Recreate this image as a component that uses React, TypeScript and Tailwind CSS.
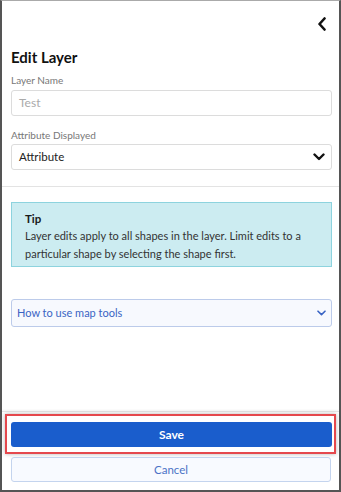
import React from "react";

const FONT = "font-['Lato','Noto_Sans',sans-serif]";

function BackChevron() {
  return (
    <svg width="10" height="14" viewBox="0 0 10 14" aria-hidden>
      <path d="M7.5 1.5 L2.5 7 L7.5 12.5" fill="none" stroke="#111" strokeWidth="2.6" strokeLinecap="round" strokeLinejoin="round" />
    </svg>
  );
}

function SelectChevron() {
  return (
    <svg width="12" height="8" viewBox="0 0 12 8" aria-hidden>
      <path d="M1.5 1.5 L6 6 L10.5 1.5" fill="none" stroke="#111" strokeWidth="2.4" strokeLinecap="round" strokeLinejoin="round" />
    </svg>
  );
}

function SmallChevron() {
  return (
    <svg width="9" height="6" viewBox="0 0 9 6" aria-hidden>
      <path d="M1 1.2 L4.5 4.6 L8 1.2" fill="none" stroke="#3a64c4" strokeWidth="1.6" strokeLinecap="round" strokeLinejoin="round" />
    </svg>
  );
}

export default function App() {
  return (
    <div
      className={`${FONT} flex h-[492px] w-[341px] flex-col border-b-2 border-l-2 border-r-2 border-t border-b-[#555] border-l-[#555] border-r-[#555] border-t-[#aaa] bg-white text-[#222]`}
    >
      <div className="flex h-[46px] shrink-0 items-center justify-end pr-[12px]">
        <BackChevron />
      </div>

      <div className="pl-[9px] pr-[7px]">
        <h1 className="text-[15px] font-bold leading-[20px] text-[#111]">Edit Layer</h1>

        <label className="mt-[6px] block text-[10px] leading-[14px] text-[#777]">Layer Name</label>
        <div className="mt-[3px] flex h-[26px] items-center rounded-[3px] border border-[#dcdcdc] px-[7px] text-[12px] text-[#aaa]">
          Test
        </div>

        <label className="mt-[12px] block text-[10px] leading-[14px] text-[#777]">Attribute Displayed</label>
        <div className="mt-[2px] flex h-[26px] items-center justify-between rounded-[3px] border border-[#dcdcdc] pl-[7px] pr-[6px] text-[11.5px] text-[#222]">
          <span>Attribute</span>
          <SelectChevron />
        </div>
      </div>

      <div className="mt-[16px] border-t border-[#e3e3e3]" />

      <div className="pl-[9px] pr-[7px]">
        <div className="mt-[15px] h-[65px] border border-[#8dd3de] bg-[#ccecf1] pl-[13px] pr-[8px] pt-[8px]">
          <p className="text-[11.5px] font-bold leading-[16px] text-[#1a1a1a]">Tip</p>
          <p className="text-[11px] leading-[18px] text-[#333]">
            Layer edits apply to all shapes in the layer. Limit edits to a particular shape by selecting the shape first.
          </p>
        </div>

        <div className="mt-[32px] flex h-[28px] items-center justify-between rounded-[3px] border border-[#bccbea] bg-[#f7f9fe] pl-[5px] pr-[5px] text-[11px] text-[#3a64c4]">
          <span>How to use map tools</span>
          <SmallChevron />
        </div>
      </div>

      <div className="flex-1" />

      <div className="border-t border-[#e6e6e6] px-[3px] pb-[8px] pt-[2px] shadow-[0_-1px_2px_rgba(0,0,0,0.04)]">
        <div className="h-[40px] border-2 border-[#e5484d] pl-[4px] pr-[2px] pt-[6px] shadow-[0_0_4px_rgba(0,0,0,0.3)]">
          <button className="flex h-[25px] w-full items-center justify-center rounded-[3px] bg-[#1a5dcc] text-[12px] font-bold text-white">
            Save
          </button>
        </div>
        <button className="ml-[6px] mr-[4px] mt-[3px] flex h-[25px] w-[320px] items-center justify-center rounded-[3px] border border-[#c4d4ee] bg-[#f8faff] text-[11.5px] text-[#4a72c6]">
          Cancel
        </button>
      </div>
    </div>
  );
}
